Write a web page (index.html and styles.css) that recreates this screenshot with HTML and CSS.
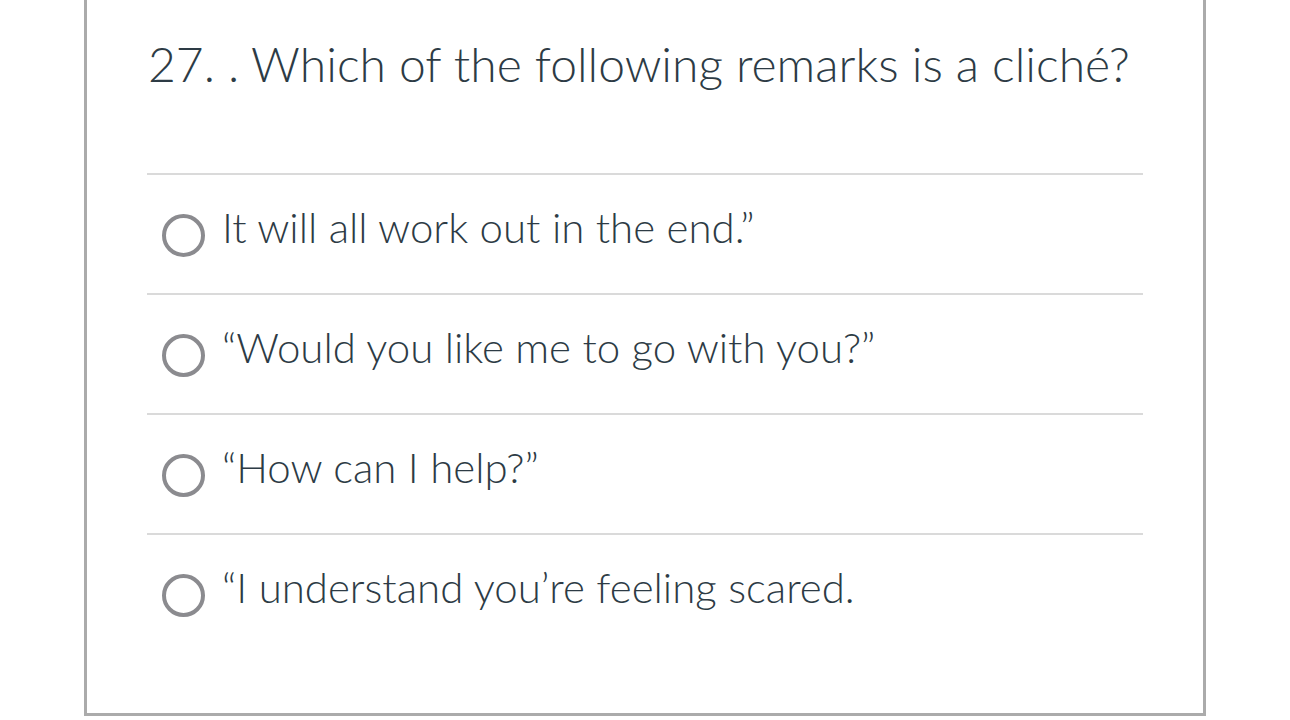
FILE: index.html
```html
<!DOCTYPE html>
<html>
<head>
<meta charset="utf-8">
<link rel="stylesheet" href="styles.css">
</head>
<body>
<div class="frame">
  <div class="question">27. . Which of the following remarks is a cliché?</div>
  <div class="answers">
    <div class="answer"><span class="radio"></span><span class="label">It will all work out in the end.”</span></div>
    <div class="answer"><span class="radio"></span><span class="label">“Would you like me to go with you?”</span></div>
    <div class="answer"><span class="radio"></span><span class="label">“How can I help?”</span></div>
    <div class="answer last"><span class="radio"></span><span class="label">“I understand you’re feeling scared.</span></div>
  </div>
</div>
</body>
</html>
```
FILE: styles.css
```css
html, body {
  margin: 0;
  padding: 0;
  background: #ffffff;
}
body {
  font-family: "Lato Light", Lato, "Open Sans", sans-serif;
  font-weight: 300;
  color: #2d3b45;
}
.frame {
  box-sizing: border-box;
  margin-left: 84px;
  width: 1122px;
  height: 716px;
  border: 3px solid #ababab;
  border-top: none;
  padding: 0 60px;
}
.question {
  font-size: 48px;
  line-height: 57.6px;
  padding-top: 35px;
  height: 173px;
  box-sizing: border-box;
  padding-left: 1px;
  white-space: nowrap;
}
.answer {
  display: flex;
  align-items: flex-start;
  height: 118px;
  border-top: 2px solid #dadada;
}
.radio {
  flex: none;
  box-sizing: border-box;
  width: 43px;
  height: 43px;
  border: 4.5px solid #8b8b8f;
  border-radius: 50%;
  margin-left: 15px;
  margin-top: 39px;
}
.label {
  font-size: 42px;
  line-height: 50.4px;
  margin-top: 27px;
  margin-left: 17px;
  white-space: nowrap;
}
```
